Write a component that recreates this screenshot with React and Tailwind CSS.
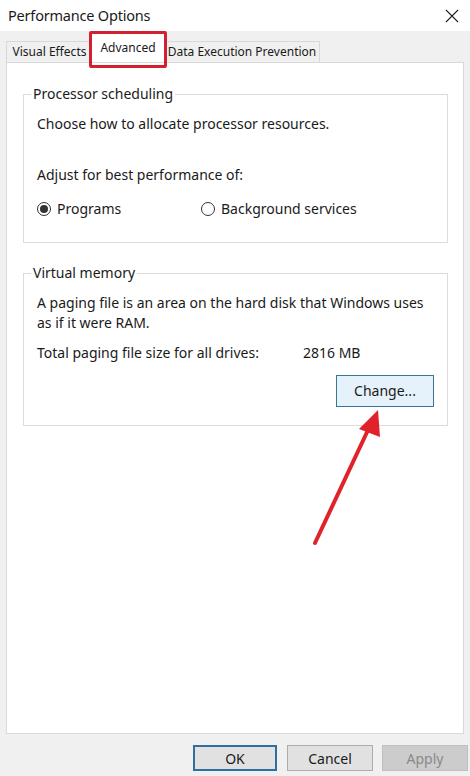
import React from 'react';

const font = { fontFamily: '"Noto Sans", "Open Sans", sans-serif' };

const Radio = ({ checked }) => (
  <span className="w-[14px] h-[14px] rounded-full border border-[#333] bg-white flex items-center justify-center shrink-0">
    {checked && <span className="w-[8px] h-[8px] rounded-full bg-[#333]" />}
  </span>
);

const Group = ({ title, className, children }) => (
  <div className={`relative ml-[16px] mr-[15px] border border-[#dcdcdc] ${className}`}>
    <span className="absolute -top-[11px] left-[7px] bg-white px-[2px] text-[14px] leading-[20px] text-[#1a1a1a]">
      {title}
    </span>
    {children}
  </div>
);

export default function App() {
  return (
    <div className="relative w-[470px] h-[776px] bg-[#f0f0f0] overflow-hidden text-[#1a1a1a]" style={font}>
      {/* title bar */}
      <div className="h-[31px] bg-white flex items-center justify-between pl-[8px] pr-[10px]">
        <span className="text-[14.5px] tracking-[-0.2px]">Performance Options</span>
        <svg width="14" height="14" viewBox="0 0 14 14" className="mr-[1px]">
          <path d="M1 1 L13 13 M13 1 L1 13" stroke="#222" strokeWidth="1.1" />
        </svg>
      </div>

      {/* tabs */}
      <div className="flex items-end h-[31px] pl-[6px] text-[12px] whitespace-nowrap">
        <div className="h-[21px] w-[86px] border border-b-0 border-r-0 border-[#d9d9d9] bg-[#f0f0f0] leading-[20px] text-center">
          Visual Effects
        </div>
        <div className="relative h-[28px] w-[72px] bg-white flex items-start justify-center pt-[5px] z-10">
          Advanced
          <span className="absolute -left-[3px] -right-[3px] -top-[3px] bottom-[-6px] border-[3px] border-[#d32030] rounded-[2px]" />
        </div>
        <div className="h-[21px] w-[156px] border border-b-0 border-[#d9d9d9] bg-[#f0f0f0] leading-[20px] text-center">
          Data Execution Prevention
        </div>
      </div>

      {/* panel */}
      <div className="mx-[6px] h-[672px] bg-white border border-[#d9d9d9] pt-[31px]">
        <Group title="Processor scheduling" className="h-[149px]">
          <div className="pl-[13px] pt-[19px] text-[14px] leading-[20px]">
            <div>Choose how to allocate processor resources.</div>
            <div className="mt-[31px]">Adjust for best performance of:</div>
            <div className="flex items-center mt-[14px]">
              <Radio checked />
              <span className="ml-[6px] w-[144px]">Programs</span>
              <Radio />
              <span className="ml-[6px]">Background services</span>
            </div>
          </div>
        </Group>

        <Group title="Virtual memory" className="h-[153px] mt-[30px]">
          <div className="pl-[13px] pt-[19px] text-[14px] leading-[20px]">
            <div className="w-[390px]">A paging file is an area on the hard disk that Windows uses as if it were RAM.</div>
            <div className="flex mt-[10px]">
              <span className="w-[266px]">Total paging file size for all drives:</span>
              <span>2816 MB</span>
            </div>
            <div className="flex justify-end pr-[13px] mt-[12px]">
              <div className="w-[98px] h-[32px] bg-[#e5f1fb] border border-[#3b7596] flex items-center justify-center">
                Change...
              </div>
            </div>
          </div>
        </Group>
      </div>

      {/* bottom buttons */}
      <div className="flex justify-end pr-[2px] mt-[11px] text-[14px]">
        <div className="w-[84px] h-[26px] bg-[#e1e1e1] border-2 border-[#2f6f9f] flex items-center justify-center">OK</div>
        <div className="ml-[10px] w-[86px] h-[26px] bg-[#e1e1e1] border border-[#adadad] flex items-center justify-center">Cancel</div>
        <div className="ml-[9px] w-[86px] h-[26px] bg-[#cccccc] border border-[#bfbfbf] flex items-center justify-center text-[#8a8a8a]">Apply</div>
      </div>

      {/* annotation arrow */}
      <svg className="absolute left-0 top-0 pointer-events-none" width="470" height="776">
        <line x1="315" y1="543" x2="368" y2="430" stroke="#e0232b" strokeWidth="4" strokeLinecap="round" />
        <polygon points="378,410 359,429 380,437" fill="#e0232b" />
      </svg>
    </div>
  );
}
